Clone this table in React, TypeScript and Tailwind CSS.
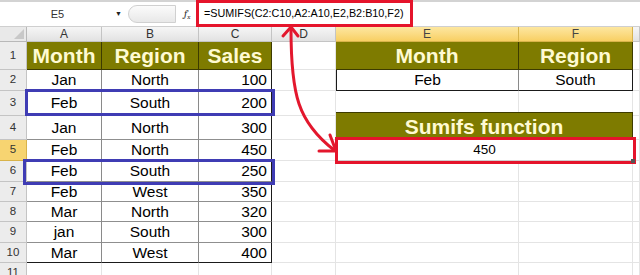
import React from "react";

type Cell = {
  text?: string;
  kind?: "head" | "data" | "num" | "merged-head" | "merged-val";
  span?: number;
};

const OLIVE = "bg-[#7e7b00]";

// rows 1..11, columns A..G (G is the leftover sliver)
const rows: Record<number, Record<string, Cell>> = {
  1: {
    A: { text: "Month", kind: "head" },
    B: { text: "Region", kind: "head" },
    C: { text: "Sales", kind: "head" },
    E: { text: "Month", kind: "head" },
    F: { text: "Region", kind: "head" },
  },
  2: {
    A: { text: "Jan", kind: "data" },
    B: { text: "North", kind: "data" },
    C: { text: "100", kind: "num" },
    E: { text: "Feb", kind: "data" },
    F: { text: "South", kind: "data" },
  },
  3: { A: { text: "Feb", kind: "data" }, B: { text: "South", kind: "data" }, C: { text: "200", kind: "num" } },
  4: {
    A: { text: "Jan", kind: "data" },
    B: { text: "North", kind: "data" },
    C: { text: "300", kind: "num" },
    E: { text: "Sumifs function", kind: "merged-head", span: 2 },
  },
  5: {
    A: { text: "Feb", kind: "data" },
    B: { text: "North", kind: "data" },
    C: { text: "450", kind: "num" },
    E: { text: "450", kind: "merged-val", span: 2 },
  },
  6: { A: { text: "Feb", kind: "data" }, B: { text: "South", kind: "data" }, C: { text: "250", kind: "num" } },
  7: { A: { text: "Feb", kind: "data" }, B: { text: "West", kind: "data" }, C: { text: "350", kind: "num" } },
  8: { A: { text: "Mar", kind: "data" }, B: { text: "North", kind: "data" }, C: { text: "320", kind: "num" } },
  9: { A: { text: "jan", kind: "data" }, B: { text: "South", kind: "data" }, C: { text: "300", kind: "num" } },
  10: { A: { text: "Mar", kind: "data" }, B: { text: "West", kind: "data" }, C: { text: "400", kind: "num" } },
  11: {},
};

const letters = ["A", "B", "C", "D", "E", "F", "G"];

function inLeftTable(col: string, r: number) {
  return ["A", "B", "C"].includes(col) && r >= 1 && r <= 10;
}

function GridCell({ col, r }: { col: string; r: number }) {
  const cell = rows[r]?.[col];
  const span = cell?.span === 2 ? "col-span-2" : "";

  if (cell?.kind === "head" || cell?.kind === "merged-head") {
    return (
      <div
        className={`${span} ${OLIVE} flex items-center justify-center border-r border-b border-[#3d3b00] text-[21px] font-bold leading-none text-[#fffad2] ${
          cell.kind === "merged-head" ? "-mt-[4px] border-t" : ""
        }`}
      >
        {cell.text}
      </div>
    );
  }

  if (cell?.kind === "merged-val") {
    return (
      <div className={`${span} flex items-center justify-center border-b border-[#cfcfcf] bg-white text-[13.5px] text-black`}>
        {cell.text}
      </div>
    );
  }

  const tableCell = inLeftTable(col, r) || (["E", "F"].includes(col) && r === 2);
  let borders = "border-r border-b border-[#e4e4e4]";
  if (tableCell) {
    const rightEdge = col === "C" || col === "F";
    const bottomEdge = r === 10 || (col !== "A" && col !== "B" && col !== "C" && r === 2);
    borders = `border-r border-b ${rightEdge ? "border-r-[#1a1a1a]" : "border-r-[#8a8a8a]"} ${
      bottomEdge ? "border-b-[#1a1a1a]" : "border-b-[#8f8f8f]"
    }`;
  }
  if (col === "E" && r === 2) borders += " border-l border-l-[#1a1a1a]";

  return (
    <div
      className={`flex items-center overflow-hidden bg-white text-[15.5px] leading-none text-black ${borders} ${
        cell?.kind === "num" ? "justify-end pr-[4px]" : "justify-center"
      }`}
    >
      {cell?.text}
    </div>
  );
}

function FormulaBar() {
  return (
    <div className="flex h-[27px] items-stretch border-t-[2px] border-[#d3d3d3] bg-white">
      <div className="flex w-[128px] items-center border-b border-[#cfcfcf] bg-white">
        <span className="w-[115px] text-center text-[11px] text-[#333]">E5</span>
        <span className="text-[7px] text-[#222]">▼</span>
      </div>
      <div className="flex w-[68px] items-center border-b border-[#cfcfcf]">
        <div className="h-[18px] w-[48px] rounded-l-full border border-[#d0d0d0] bg-gradient-to-b from-[#fbfbfb] to-[#e8e8e8]" />
        <span className="ml-[8px] font-serif text-[11px] italic text-[#333]">
          f<sub className="text-[7px]">x</sub>
        </span>
      </div>
      <div className="-mt-[2px] flex w-[217px] items-center border-[3px] border-[#e5142b] bg-white pl-[5px]">
        <span className="whitespace-nowrap text-[10.8px] text-black">=SUMIFS(C2:C10,A2:A10,E2,B2:B10,F2)</span>
      </div>
      <div className="flex-1 border-b border-[#cfcfcf]" />
    </div>
  );
}

export default function App() {
  const rowNums = [1, 2, 3, 4, 5, 6, 7, 8, 9, 10, 11];

  return (
    <div
      className="relative h-[275px] w-[640px] overflow-hidden bg-white"
      style={{ fontFamily: '"Liberation Sans", Arial, sans-serif' }}
    >
      <FormulaBar />

      <div className="grid grid-cols-[27px_75px_97px_73px_64px_183px_114px_1fr] grid-rows-[15px_28px_21px_25px_24px_21px_21px_20px_20px_21px_20px_20px]">
        {/* header row */}
        <div className="relative border-r border-b border-[#b8b8b8] bg-[#e9e9e9]">
          <svg className="absolute bottom-[2px] right-[2px]" width="10" height="10" viewBox="0 0 10 10">
            <polygon points="10,0 10,10 0,10" fill="#c8c8c8" />
          </svg>
        </div>
        {letters.map((l) => (
          <div
            key={l}
            className={`flex items-center justify-center border-r border-b text-[12px] leading-none ${
              l === "E" || l === "F"
                ? "border-[#d8b34a] bg-gradient-to-b from-[#fde7a0] to-[#f8cf62] text-[#444]"
                : "border-[#c4c4c4] bg-gradient-to-b from-[#f6f6f6] to-[#e2e2e2] text-[#333]"
            }`}
          >
            {l === "G" ? "" : l}
          </div>
        ))}

        {rowNums.map((r) => (
          <React.Fragment key={r}>
            <div
              className={`flex items-center justify-center border-r border-b text-[11.5px] leading-none text-[#333] ${
                r === 5 ? "border-[#d8b34a] bg-[#f7d471]" : "border-[#c4c4c4] bg-[#ececec]"
              }`}
            >
              {r}
            </div>
            {letters
              .filter((c) => !(c === "F" && (r === 4 || r === 5)))
              .map((c) => (
                <GridCell key={c} col={c} r={r} />
              ))}
          </React.Fragment>
        ))}
      </div>

      {/* highlight frames drawn over the sheet */}
      <div className="pointer-events-none absolute left-[25px] top-[89px] h-[27px] w-[250px] border-[3px] border-[#3f3cb4]" />
      <div className="pointer-events-none absolute left-[23px] top-[159px] h-[26px] w-[252px] border-[3px] border-[#3f3cb4]" />
      <div className="pointer-events-none absolute left-[335px] top-[137px] h-[27px] w-[301px] border-[3px] border-[#e5142b]">
        <div className="absolute -bottom-[2px] -right-[2px] h-[4px] w-[4px] bg-[#555]" />
      </div>

      <svg className="pointer-events-none absolute left-0 top-0" width="640" height="275" viewBox="0 0 640 275">
        <g fill="none" stroke="#e3172d" strokeWidth="3" strokeLinecap="round" strokeLinejoin="round">
          <path d="M291 29 C 291 95, 298 122, 334 150" />
          <path d="M283 36 L291 27 L298 36" />
          <path d="M319 151 L336 151 L330 135" />
        </g>
      </svg>
    </div>
  );
}
